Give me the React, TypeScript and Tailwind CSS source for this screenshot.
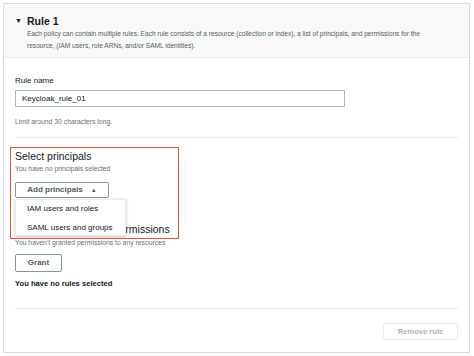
import React from 'react';

const font = { fontFamily: '"Liberation Sans", Arial, sans-serif' };

export default function App() {
  return (
    <div className="relative w-[474px] h-[356px] bg-white overflow-hidden pt-[3px] pl-[3px]" style={font}>
      <div className="w-[467px] h-[350px] border border-[#d9dcdd] flex flex-col">
        {/* Header */}
        <div className="h-[54px] bg-[#f9f9f9] border-b border-[#eaeded] pl-[11px] pt-[10px]">
          <div className="flex items-center h-[14px]">
            <span className="w-[12px] text-[7px] leading-[14px] text-[#16191f]">▼</span>
            <span className="text-[10.5px] leading-[14px] font-bold text-[#16191f]">Rule 1</span>
          </div>
          <div className="pl-[12px] text-[6.6px] leading-[12px] text-[#545b64]">
            <div className="whitespace-nowrap">
              Each policy can contain multiple rules. Each rule consists of a resource (collection or index), a list of principals, and permissions for the
            </div>
            <div className="whitespace-nowrap">resource, (IAM users, role ARNs, and/or SAML identities).</div>
          </div>
        </div>

        {/* Body */}
        <div className="flex flex-col px-[11px]">
          <div className="mt-[16px] text-[8px] leading-[14px] text-[#16191f]">Rule name</div>
          <div className="mt-[2px] w-[330px] h-[17px] border border-[#aab7b8] bg-white flex items-center pl-[6px]">
            <span className="text-[8px] text-[#16191f]">Keycloak_rule_01</span>
          </div>
          <div className="mt-[9px] text-[6.8px] leading-[12px] text-[#687078]">Limit around 30 characters long.</div>
          <div className="mt-[9px] h-px bg-[#eaeded]" />

          <div className="mt-[10px] text-[10.5px] leading-[16px] text-[#16191f]">Select principals</div>
          <div className="text-[6.8px] leading-[10px] text-[#687078]">You have no principals selected</div>
          <div className="mt-[8px] w-[94px] h-[16px] border border-[#8d9696] rounded-[2px] flex items-center justify-center gap-[8px] bg-white">
            <span className="text-[8px] font-bold text-[#545b64]">Add principals</span>
            <span className="text-[6px] text-[#545b64]">▲</span>
          </div>

          <div className="mt-[23px] text-[10.5px] leading-[16px] text-[#16191f] whitespace-nowrap">Grant resources and permissions</div>
          <div className="text-[6.8px] leading-[11px] text-[#687078]">You haven't granted permissions to any resources</div>
          <div className="mt-[6px] w-[47px] h-[18px] border border-[#8d9696] rounded-[2px] flex items-center justify-center bg-white">
            <span className="text-[8px] font-bold text-[#545b64]">Grant</span>
          </div>
          <div className="mt-[6px] text-[7.6px] leading-[12px] font-bold text-[#16191f]">You have no rules selected</div>
          <div className="mt-[18px] h-px bg-[#eaeded]" />
          <div className="mt-[14px] self-end w-[75px] h-[17px] border border-[#eaeded] rounded-[2px] flex items-center justify-center">
            <span className="text-[7.6px] font-bold text-[#aab7b8]">Remove rule</span>
          </div>
        </div>
      </div>

      {/* Dropdown menu */}
      <div className="absolute left-[15px] top-[199px] w-[111px] h-[37px] bg-white border border-[#eaeded] shadow-[0_1px_3px_rgba(0,0,0,0.25)] flex flex-col justify-center pl-[11px] gap-[8px]">
        <div className="text-[8px] leading-[11px] text-[#16191f]">IAM users and roles</div>
        <div className="text-[8px] leading-[11px] text-[#16191f]">SAML users and groups</div>
      </div>

      {/* Highlight box */}
      <div className="absolute left-[10px] top-[147px] w-[169px] h-[92px] border-[1.5px] border-[#e0533f]" />
    </div>
  );
}
